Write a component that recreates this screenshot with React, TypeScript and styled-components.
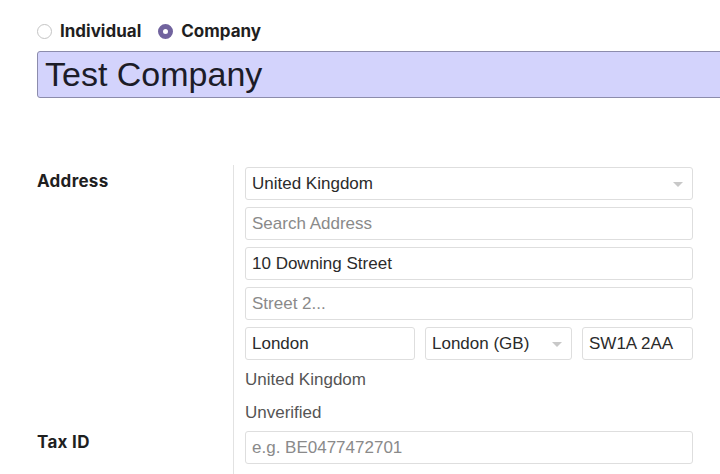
import styled, {createGlobalStyle} from 'styled-components';

const GlobalStyle = createGlobalStyle`
   html, body {
      margin: 0;
      padding: 0;
      background: #ffffff;
      overflow: hidden;
   }
   body {
      font-family: 'Liberation Sans', Arial, sans-serif;
      color: #212529;
   }
`;

const Page = styled.div`
   width: 720px;
   height: 474px;
   padding: 21px 0 0 37px;
   box-sizing: border-box;
   overflow: hidden;
`;

const RadioRow = styled.div`
   display: flex;
   align-items: center;
   gap: 17px;
   height: 20px;
`;

const RadioLabel = styled.label`
   display: flex;
   align-items: center;
   gap: 8px;
   font-family: Inter, Roboto, 'Liberation Sans', sans-serif;
   font-weight: 700;
   font-size: 17px;
   color: #1f1f1f;
`;

const RadioDot = styled.span<{$checked: boolean}>`
   width: 15px;
   height: 15px;
   border-radius: 50%;
   box-sizing: border-box;
   border: ${props => (props.$checked ? '5px solid #71639e' : '1px solid #c4c4c4')};
   background: #ffffff;
`;

const NameField = styled.div`
   margin-top: 10px;
   width: 760px;
   height: 47px;
   box-sizing: border-box;
   padding-left: 7px;
   display: flex;
   align-items: center;
   background: #d3d3fc;
   border: 1px solid #8c8cac;
   border-radius: 3px;
   font-size: 34px;
   color: #1c1c28;
`;

const Form = styled.div`
   display: grid;
   grid-template-columns: 196px 1fr;
   margin-top: 67px;
`;

const FieldLabel = styled.div`
   font-family: Inter, Roboto, 'Liberation Sans', sans-serif;
   font-weight: 700;
   font-size: 17px;
   letter-spacing: 0.3px;
   color: #1f1f1f;
   padding-top: 6px;
`;

const FieldCell = styled.div<{$bottom?: number}>`
   border-left: 1px solid #e2e2e2;
   padding: 2px 27px ${props => props.$bottom ?? 0}px 11px;
   display: flex;
   flex-direction: column;
   gap: 7px;
`;

const InputRow = styled.div`
   display: flex;
   gap: 10px;
`;

const Input = styled.div<{$placeholder?: boolean; $width?: string}>`
   position: relative;
   flex: ${props => props.$width ?? '1 1 auto'};
   height: 33px;
   box-sizing: border-box;
   padding: 0 6px;
   display: flex;
   align-items: center;
   border: 1px solid #dedede;
   border-radius: 3px;
   font-size: 17px;
   color: ${props => (props.$placeholder ? '#8a8a8a' : '#2b2b2b')};
   white-space: nowrap;
`;

const Caret = styled.span`
   position: absolute;
   right: 9px;
   top: 14px;
   width: 0;
   height: 0;
   border-left: 5px solid transparent;
   border-right: 5px solid transparent;
   border-top: 5px solid #c8c8c8;
`;

const StaticText = styled.div`
   height: 26px;
   display: flex;
   align-items: center;
   font-size: 17px;
   color: #555555;
`;

const App = () => (
   <>
      <GlobalStyle />
      <Page>
         <RadioRow>
            <RadioLabel>
               <RadioDot $checked={false} />
               Individual
            </RadioLabel>
            <RadioLabel>
               <RadioDot $checked />
               Company
            </RadioLabel>
         </RadioRow>
         <NameField>Test Company</NameField>
         <Form>
            <FieldLabel>Address</FieldLabel>
            <FieldCell>
               <Input>
                  United Kingdom
                  <Caret />
               </Input>
               <Input $placeholder>Search Address</Input>
               <Input>10 Downing Street</Input>
               <Input $placeholder>Street 2...</Input>
               <InputRow>
                  <Input $width='0 0 170px'>London</Input>
                  <Input $width='0 0 147px'>
                     London (GB)
                     <Caret />
                  </Input>
                  <Input $width='1 1 auto'>SW1A 2AA</Input>
               </InputRow>
               <StaticText>United Kingdom</StaticText>
               <StaticText>Unverified</StaticText>
            </FieldCell>
            <FieldLabel>Tax ID</FieldLabel>
            <FieldCell $bottom={20}>
               <Input $placeholder style={{marginTop: 3}}>
                  e.g. BE0477472701
               </Input>
            </FieldCell>
         </Form>
      </Page>
   </>
);

export default App;
